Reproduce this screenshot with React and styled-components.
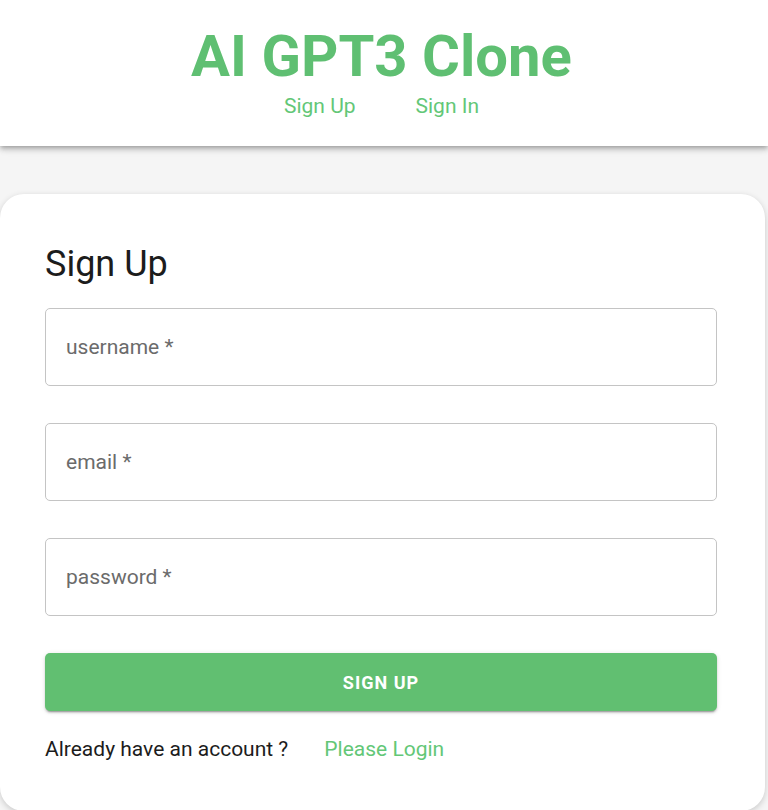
import React from 'react'
import styled, { createGlobalStyle } from 'styled-components'

const GlobalStyle = createGlobalStyle`
  body {
    margin: 0;
    background-color: #f5f5f5;
    font-family: Roboto, "Liberation Sans", sans-serif;
  }
  * { box-sizing: border-box; }
`

const Header = styled.header`
  height: 146px;
  background-color: #fff;
  box-shadow: 0 2px 4px -1px rgba(0,0,0,.2), 0 4px 5px 0 rgba(0,0,0,.14), 0 1px 10px 0 rgba(0,0,0,.12);
  display: flex;
  flex-direction: column;
  align-items: center;
  padding: 22px 5px 0 0;
`

const Title = styled.h1`
  margin: 0;
  font-size: 58px;
  font-weight: 700;
  line-height: 1.2;
  color: #5fbf72;
`

const Nav = styled.nav`
  display: flex;
  gap: 60px;
  margin-top: 2px;
`

const NavLink = styled.a`
  font-size: 21px;
  color: #63c777;
  text-decoration: none;
  cursor: pointer;
`

const Card = styled.div`
  margin-top: 48px;
  width: 765px;
  background-color: #fff;
  border-radius: 24px;
  box-shadow: 0 2px 6px rgba(0,0,0,.18);
  padding: 49px 48px 50px 45px;
`

const Heading = styled.h2`
  margin: 0 0 22px;
  font-size: 36px;
  font-weight: 400;
  line-height: 1.2;
  color: #1c1c1c;
`

const Form = styled.form`
  display: flex;
  flex-direction: column;
  gap: 37px;
`

const Field = styled.input`
  height: 78px;
  width: 100%;
  border: 1px solid #c4c4c4;
  border-radius: 5px;
  padding: 0 20px;
  font-family: inherit;
  font-size: 21px;
  color: #222;
  outline: none;
  &::placeholder { color: #6b6b6b; }
  &:focus { border-color: #5fbf72; }
`

const Button = styled.button`
  height: 58px;
  border: none;
  border-radius: 5px;
  background-color: #61bf71;
  color: #fff;
  font-family: inherit;
  font-size: 18px;
  font-weight: 700;
  letter-spacing: 1px;
  text-transform: uppercase;
  cursor: pointer;
  box-shadow: 0 3px 1px -2px rgba(0,0,0,.2), 0 2px 2px 0 rgba(0,0,0,.14), 0 1px 5px 0 rgba(0,0,0,.12);
`

const Footer = styled.p`
  margin: 26px 0 0;
  font-size: 21px;
  color: #1c1c1c;
  display: flex;
  gap: 36px;
`

const LoginLink = styled.a`
  color: #63c777;
  cursor: pointer;
`

export default function App() {
  return (
    <>
      <GlobalStyle />
      <Header>
        <Title>AI GPT3 Clone</Title>
        <Nav>
          <NavLink>Sign Up</NavLink>
          <NavLink>Sign In</NavLink>
        </Nav>
      </Header>
      <Card>
        <Heading>Sign Up</Heading>
        <Form onSubmit={e => e.preventDefault()}>
          <Field type="text" placeholder="username *" />
          <Field type="email" placeholder="email *" />
          <Field type="password" placeholder="password *" />
          <Button type="submit">Sign Up</Button>
        </Form>
        <Footer>
          Already have an account ?
          <LoginLink>Please Login</LoginLink>
        </Footer>
      </Card>
    </>
  )
}
